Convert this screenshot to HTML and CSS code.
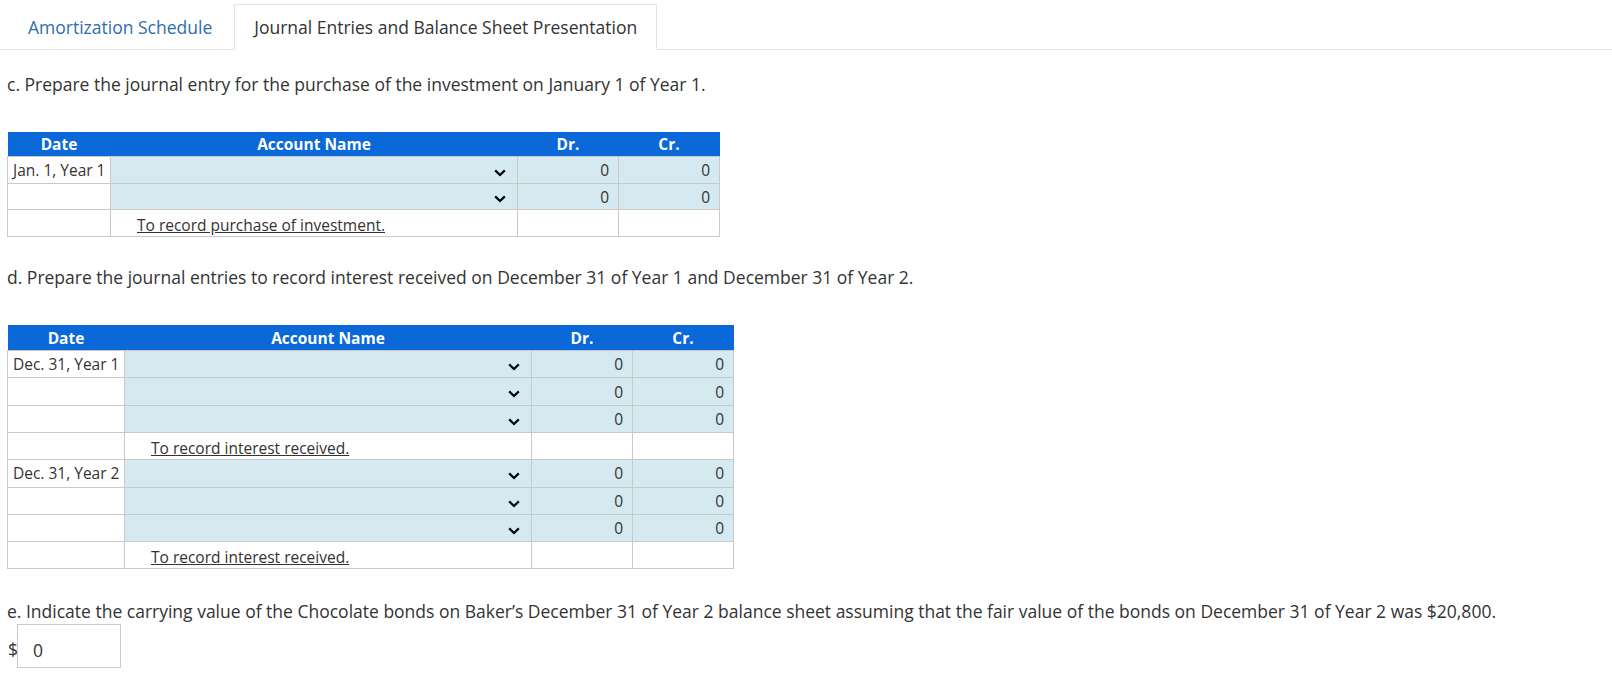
FILE: index.html
```html
<!DOCTYPE html>
<html>
<head>
<meta charset="utf-8">
<link rel="stylesheet" href="styles.css">
</head>
<body>
<div class="page">
  <div class="tabs">
    <div class="tab">Amortization Schedule</div>
    <div class="tab active">Journal Entries and Balance Sheet Presentation</div>
  </div>

  <p class="q q-c">c. Prepare the journal entry for the purchase of the investment on January 1 of Year 1.</p>

  <table class="je je1">
    <colgroup><col class="c-date1"><col class="c-acct"><col class="c-amt"><col class="c-amt"></colgroup>
    <thead><tr><th>Date</th><th>Account Name</th><th>Dr.</th><th>Cr.</th></tr></thead>
    <tbody>
      <tr><td class="date">Jan. 1, Year 1</td><td class="acct"><span class="chev"><svg width="12" height="8" viewBox="0 0 12 8"><path d="M1.2 1.4 L6 6 L10.8 1.4" fill="none" stroke="#000" stroke-width="2.2"/></svg></span></td><td class="amt">0</td><td class="amt">0</td></tr>
      <tr><td class="date"></td><td class="acct"><span class="chev"><svg width="12" height="8" viewBox="0 0 12 8"><path d="M1.2 1.4 L6 6 L10.8 1.4" fill="none" stroke="#000" stroke-width="2.2"/></svg></span></td><td class="amt">0</td><td class="amt">0</td></tr>
      <tr><td class="date"></td><td class="note"><span>To record purchase of investment.</span></td><td class="blank"></td><td class="blank"></td></tr>
    </tbody>
  </table>

  <p class="q q-d">d. Prepare the journal entries to record interest received on December 31 of Year 1 and December 31 of Year 2.</p>

  <table class="je je2">
    <colgroup><col class="c-date2"><col class="c-acct"><col class="c-amt"><col class="c-amt"></colgroup>
    <thead><tr><th>Date</th><th>Account Name</th><th>Dr.</th><th>Cr.</th></tr></thead>
    <tbody>
      <tr><td class="date">Dec. 31, Year 1</td><td class="acct"><span class="chev"><svg width="12" height="8" viewBox="0 0 12 8"><path d="M1.2 1.4 L6 6 L10.8 1.4" fill="none" stroke="#000" stroke-width="2.2"/></svg></span></td><td class="amt">0</td><td class="amt">0</td></tr>
      <tr><td class="date"></td><td class="acct"><span class="chev"><svg width="12" height="8" viewBox="0 0 12 8"><path d="M1.2 1.4 L6 6 L10.8 1.4" fill="none" stroke="#000" stroke-width="2.2"/></svg></span></td><td class="amt">0</td><td class="amt">0</td></tr>
      <tr><td class="date"></td><td class="acct"><span class="chev"><svg width="12" height="8" viewBox="0 0 12 8"><path d="M1.2 1.4 L6 6 L10.8 1.4" fill="none" stroke="#000" stroke-width="2.2"/></svg></span></td><td class="amt">0</td><td class="amt">0</td></tr>
      <tr><td class="date"></td><td class="note"><span>To record interest received.</span></td><td class="blank"></td><td class="blank"></td></tr>
      <tr><td class="date">Dec. 31, Year 2</td><td class="acct"><span class="chev"><svg width="12" height="8" viewBox="0 0 12 8"><path d="M1.2 1.4 L6 6 L10.8 1.4" fill="none" stroke="#000" stroke-width="2.2"/></svg></span></td><td class="amt">0</td><td class="amt">0</td></tr>
      <tr><td class="date"></td><td class="acct"><span class="chev"><svg width="12" height="8" viewBox="0 0 12 8"><path d="M1.2 1.4 L6 6 L10.8 1.4" fill="none" stroke="#000" stroke-width="2.2"/></svg></span></td><td class="amt">0</td><td class="amt">0</td></tr>
      <tr><td class="date"></td><td class="acct"><span class="chev"><svg width="12" height="8" viewBox="0 0 12 8"><path d="M1.2 1.4 L6 6 L10.8 1.4" fill="none" stroke="#000" stroke-width="2.2"/></svg></span></td><td class="amt">0</td><td class="amt">0</td></tr>
      <tr><td class="date"></td><td class="note"><span>To record interest received.</span></td><td class="blank"></td><td class="blank"></td></tr>
    </tbody>
  </table>

  <p class="q q-e">e. Indicate the carrying value of the Chocolate bonds on Baker’s December 31 of Year 2 balance sheet assuming that the fair value of the bonds on December 31 of Year 2 was $20,800.</p>
  <div class="answer"><span class="dollar">$</span><div class="box">0</div></div>
</div>
</body>
</html>
```

FILE: styles.css
```css
html, body {
  margin: 0;
  padding: 0;
  background: #fff;
}
body {
  font-family: "Open Sans", "Noto Sans", sans-serif;
  color: #333;
}
.page {
  padding: 0 0 0 7px;
}
.tabs {
  display: flex;
  align-items: flex-end;
  height: 49px;
  border-bottom: 1px solid #dfe2e7;
  margin-left: -7px;
  padding-left: 7px;
}
.tab {
  height: 45px;
  line-height: 45px;
  padding: 0 21px;
  font-size: 17.5px;
  color: #2e6dae;
  box-sizing: border-box;
  margin-bottom: -1px;
}
.tab.active {
  height: 46px;
  color: #333;
  background: #fff;
  border: 1px solid #dfe2e7;
  border-bottom: 1px solid #fff;
  padding: 0 19px;
  line-height: 44px;
  margin-left: 1px;
}
.q {
  margin: 0;
  font-size: 17.5px;
  line-height: 24px;
  color: #333;
}
.q-c { margin-top: 22px; }
.q-d { margin-top: 28px; }
.q-e { margin-top: 30px; }

.je {
  border-collapse: collapse;
  table-layout: fixed;
  font-size: 15.5px;
}
.je1 { margin-top: 36px; width: 712px; }
.je2 { margin-top: 36px; width: 726px; }
.c-date1 { width: 103px; }
.c-date2 { width: 117px; }
.c-acct { width: 407px; }
.c-amt { width: 101px; }

.je th {
  background: #0a68d8;
  color: #fff;
  font-weight: 700;
  height: 24px;
  padding: 0;
  line-height: 20px;
  border: none;
  text-align: center;
}
.je2 th { height: 25px; }
.je td {
  height: 27px;
  padding: 0;
  border: 1px solid #c9c9c9;
  box-sizing: border-box;
  line-height: 20px;
  white-space: nowrap;
}
.je1 td { height: 26.7px; }
.je2 td { height: 27.3px; }
.je td.date {
  padding-left: 5px;
  color: #333;
  background: #fff;
}
.je td.acct {
  background: #d4e9f0;
  text-align: right;
  padding-right: 11px;
}
.chev {
  display: inline-block;
  vertical-align: middle;
  line-height: 0;
  margin-top: 2px;
}
.je td.amt {
  background: #d4e9f0;
  text-align: right;
  padding-right: 9px;
  color: #333;
}
.je td.note {
  background: #fff;
  padding-left: 26px;
  padding-top: 4px;
}
.je td.note span {
  text-decoration: underline;
  color: #333;
}
.je td.blank {
  background: #fff;
}

.answer {
  display: flex;
  align-items: center;
  margin-top: 1px;
}
.dollar {
  font-size: 17.5px;
  line-height: 22px;
  margin-left: 1px;
  width: 9px;
  margin-top: 6px;
}
.box {
  width: 104px;
  height: 44px;
  box-sizing: border-box;
  border: 1px solid #ccc;
  font-size: 17.5px;
  line-height: 42px;
  padding-left: 15px;
  padding-top: 4px;
  color: #333;
}
```
